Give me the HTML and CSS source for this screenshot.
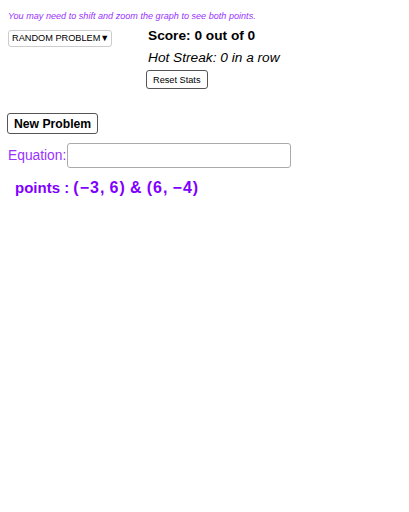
FILE: index.html
```html
<!DOCTYPE html>
<html>
<head>
<meta charset="utf-8">
<link rel="stylesheet" href="styles.css">
</head>
<body>
<p class="hint">You may need to shift and zoom the graph to see both points.</p>
<div class="top">
  <div class="left">
    <div class="select">RANDOM PROBLEM<span class="arrow">▼</span></div>
  </div>
  <div class="stats">
    <div class="score">Score: 0 out of 0</div>
    <div class="streak">Hot Streak: 0 in a row</div>
    <button class="reset">Reset Stats</button>
  </div>
</div>
<button class="newp">New Problem</button>
<div class="eqrow">
  <span class="eqlabel">Equation:</span>
  <input class="eqinput" type="text">
</div>
<div class="points">points : <span class="math">(−3,&#8201;6)&#8201;&amp;&#8201;(6,&#8201;−4)</span></div>
</body>
</html>
```
FILE: styles.css
```css
html, body { margin: 0; padding: 0; background: #fff; }
body { font-family: "Liberation Sans", Arial, sans-serif; color: #000; padding: 10px 8px 0 8px; }
.hint { margin: 0; font-size: 9.1px; font-style: italic; color: #9933ff; line-height: 12px; }
.top { display: flex; margin-top: 5px; }
.left { width: 140px; }
.select { display: inline-flex; align-items: center; white-space: nowrap; height: 17px; padding: 0 2px 0 3px; border: 1px solid #ccc; border-radius: 3px; font-size: 9.2px; box-sizing: border-box; width: 104px; }
.arrow { font-size: 9px; margin-left: 0; }
.stats { display: flex; flex-direction: column; align-items: flex-start; }
.score { font-weight: bold; font-size: 13.7px; line-height: 18px; margin-top: 0; }
.streak { font-style: italic; font-size: 13.7px; line-height: 18px; margin-top: 4px; }
.reset { margin: 3px 0 0 -2px; font-family: "Liberation Sans", Arial, sans-serif; font-size: 9.2px; height: 19px; padding: 0 6px; background: #fff; border: 1px solid #555; border-radius: 3px; }
.newp { display: block; margin: 24px 0 0 -1px; font-family: "Liberation Sans", Arial, sans-serif; font-weight: bold; font-size: 12.2px; height: 21px; padding: 0 6px; background: #fff; border: 1px solid #555; border-radius: 3px; }
.eqrow { display: flex; align-items: center; margin-top: 9px; }
.eqlabel { color: #9933ff; font-size: 13.8px; }
.eqinput { width: 224px; height: 25px; box-sizing: border-box; border: 1px solid #aaa; border-radius: 3px; margin: 0 0 0 1px; padding: 0; }
.points { margin: 11px 0 0 7px; color: #8000ff; font-weight: bold; font-size: 15px; }
.math { font-family: "Liberation Sans", sans-serif; font-size: 16px; letter-spacing: 1px; }
```
